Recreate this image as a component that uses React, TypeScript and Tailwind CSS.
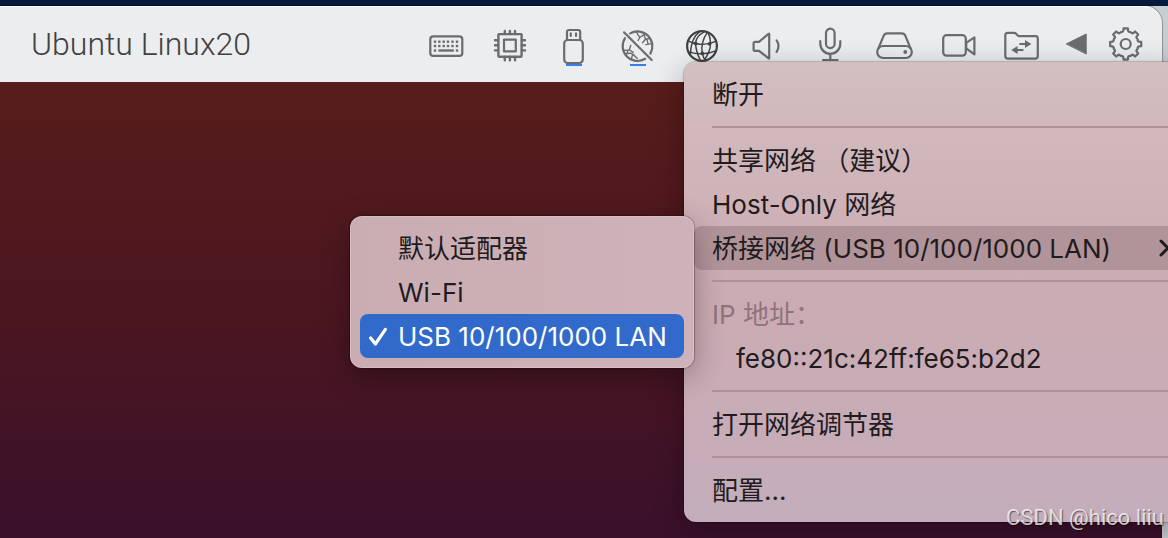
import React from 'react';

const UI_FONT = "font-['Inter','Noto_Sans_CJK_SC',sans-serif]";

// eight teeth with rounded valleys between them
const GEAR_PATH = (() => {
  const at = (angle: number, r: number) => `${(19.7 + r * Math.cos(angle)).toFixed(2)} ${(22 + r * Math.sin(angle)).toFixed(2)}`;
  const step = Math.PI / 4;
  let d = '';
  for (let i = 0; i < 8; i++) {
    const mid = i * step - Math.PI / 2;
    d += `${i === 0 ? 'M' : 'L'}${at(mid - 0.17, 13.6)}L${at(mid - 0.14, 15.7)}L${at(mid + 0.14, 15.7)}L${at(mid + 0.17, 13.6)}`;
    d += `Q${at(mid + 0.22, 12)} ${at(mid + step / 2, 12.9)}Q${at(mid + step - 0.22, 12)} ${at(mid + step - 0.17, 13.6)}`;
  }
  return `${d}Z`;
})();

const KEY_COLUMNS = [9, 13.3, 17.7, 22, 26.5, 31];

interface Device {
  label: string;
  width: string;
  color: string;
  active?: boolean;
  art: React.ReactNode;
}

const DEVICES: Device[] = [
  {
    label: '键盘',
    width: 'w-16',
    color: 'text-[#6b6c6e]',
    art: (
      <>
        <rect x="4.3" y="14.3" width="32" height="19.6" rx="3" />
        <g fill="currentColor" stroke="none">
          {[19.7, 24].map(y => KEY_COLUMNS.map(x => <rect key={`${x}-${y}`} x={x - 1.2} y={y - 1.2} width="2.4" height="2.4" />))}
          <rect x="7.8" y="27.3" width="2.4" height="2.4" />
          <rect x="12.4" y="27.3" width="15.4" height="2.4" />
          <rect x="29.8" y="27.3" width="2.4" height="2.4" />
        </g>
      </>
    ),
  },
  {
    label: '处理器',
    width: 'w-16',
    color: 'text-[#6b6c6e]',
    art: (
      <>
        <rect x="8.4" y="12.1" width="23.2" height="22.6" rx="0.6" strokeWidth="2.4" />
        <rect x="14" y="17.6" width="11.8" height="11.8" />
        <path strokeWidth="2.4" d="M14.8 9v3M19.9 9v3M25 9v3M14.8 35v3.2M19.9 35v3.2M25 35v3.2M5 18.2h3M5 23.3h3M5 28.4h3M32 18.2h3M32 23.3h3M32 28.4h3" />
      </>
    ),
  },
  {
    label: 'USB',
    width: 'w-16',
    color: 'text-[#6b6c6e]',
    active: true,
    art: (
      <>
        <rect x="10.2" y="18" width="18.6" height="23" rx="3.5" />
        <path d="M13 17.8V10q0-2 2-2h9.2q2 0 2 2v7.8M16.8 11.4v2.6M22 11.4v2.6" />
      </>
    ),
  },
  {
    label: '网络 2',
    width: 'w-16',
    color: 'text-[#6b6c6e]',
    active: true,
    art: (
      <>
        <path d="M12.2 11.4A14.8 14.8 0 0 1 32.4 31.6M27.2 36.8A14.8 14.8 0 0 1 7 16.2" />
        <path d="M6 10.3L33.7 38" />
        <path strokeWidth="1.4" d="M18.5 10.2l3.2 5.3-1.6 3M21.7 15.5l4.8-3.2M24.5 20.8l3-3.6 4.8-1M27.5 17.2l-1.3-3.6M27.8 22.6l5.6-1M29.2 18.2l.8 4M5.4 28.4l5.8-.5 4 2.4M11.2 27.9l1.6-4.6M7.2 31.8l5.4-.6 3.6 2M9 31.6l.8-3.4M13.4 36.6l1.4-4.4 4.6 4.2" />
      </>
    ),
  },
  {
    label: '网络',
    width: 'w-16',
    color: 'text-[#3f4142]',
    art: (
      <>
        <circle cx="20" cy="24" r="14.9" />
        <g strokeWidth="1.4">
          <path d="M17.8 9.4C12.4 13.4 8.6 20.6 8.4 32.8" />
          <path d="M22.6 9.6C16.6 12.6 13.4 17.6 13.6 21.4c.2 6.4 2 11.4 4.6 16.6" />
          <path d="M25.4 10.4C21.4 15.6 18.6 24.6 20.3 31.4c.6 2.6 1.3 5 3.2 6.8" />
          <path d="M26 10.8c3 4.8 3.4 13.6.6 19.6-1.2 2.8-2.6 5.2-4.2 7.8" />
          <path d="M5.6 18.6c6 3.6 17 6 28.8.6" />
          <path d="M6 29.6c8.6 2.8 19.6 3 28.2-1" />
        </g>
        <g fill="currentColor" stroke="none">
          <circle cx="13.6" cy="21.4" r="1.9" />
          <circle cx="27.6" cy="21.8" r="1.9" />
          <circle cx="20.3" cy="31.4" r="1.9" />
        </g>
      </>
    ),
  },
  {
    label: '声音',
    width: 'w-16',
    color: 'text-[#6b6c6e]',
    art: (
      <>
        <path d="M9 19.8h4L22.6 11.8q.6-.4.6.4V36q0 .8-.6.4L13 28.8H9q-1.4 0-1.4-1.4v-6.2q0-1.4 1.4-1.4z" />
        <path d="M30.6 18.4q3.8 5.6 0 11.4" />
      </>
    ),
  },
  {
    label: '麦克风',
    width: 'w-16',
    color: 'text-[#6b6c6e]',
    art: (
      <>
        <rect x="16" y="6.7" width="8.6" height="19.4" rx="4.3" />
        <path d="M10.3 19v2.8a10 10 0 0 0 20 0V19M20.3 32v5.6M13 38h14.6" />
      </>
    ),
  },
  {
    label: '硬盘',
    width: 'w-16',
    color: 'text-[#6b6c6e]',
    art: (
      <>
        <path d="M4.4 26.4L9.6 13.8q1-2.4 3.6-2.4h14.6q2.6 0 3.6 2.4l5.2 12.6" />
        <rect x="3.2" y="24" width="34.6" height="12" rx="6" />
        <circle cx="31.3" cy="30" r="1.9" fill="currentColor" stroke="none" />
      </>
    ),
  },
  {
    label: '摄像头',
    width: 'w-16',
    color: 'text-[#6b6c6e]',
    art: (
      <>
        <rect x="5.2" y="13.2" width="22.6" height="20.4" rx="3.4" />
        <path d="M28.2 20.8l8.2-5.4v17l-8.2-6z" />
      </>
    ),
  },
  {
    label: '共享文件夹',
    width: 'w-16',
    color: 'text-[#6b6c6e]',
    art: (
      <>
        <path d="M3.3 34V13.2q0-2.4 2.4-2.4h6.2q1.4 0 2.2.9l1.4 1.7q.6.7 1.6.7h16.4q2.3 0 2.3 2.3V34q0 2.6-2.6 2.6H5.9q-2.6 0-2.6-2.6z" />
        <path d="M18.2 22h6M14.6 28h6" />
        <path fill="currentColor" stroke="none" d="M23 18l6.4 4-6.4 4zM15.6 24l-6.4 4 6.4 4z" />
      </>
    ),
  },
  {
    label: '收起',
    width: 'w-11',
    color: 'text-[#6b6c6e]',
    art: <path fill="currentColor" strokeWidth="1" d="M10.6 21.8L30.2 12v19.6z" />,
  },
  {
    label: '设置',
    width: 'w-14',
    color: 'text-[#6b6c6e]',
    art: (
      <>
        <path d={GEAR_PATH} />
        <circle cx="19.7" cy="22" r="5" />
      </>
    ),
  },
];

const DeviceButton: React.FC<{ device: Device }> = ({ device }) => (
  <button type="button" aria-label={device.label} className={`flex h-full shrink-0 items-center justify-center ${device.width} ${device.color}`}>
    <svg className="h-11 w-10" viewBox="0 0 40 44" fill="none" stroke="currentColor" strokeWidth="2.2" strokeLinecap="round" strokeLinejoin="round">
      {device.art}
      {device.active && <rect x="12" y="42" width="16" height="2" fill="#3b7ded" stroke="none" />}
    </svg>
  </button>
);

const Separator: React.FC = () => <div role="separator" className="my-[10px] ml-[18px] h-[2px] bg-[#ae929b]" />;

const MenuItem: React.FC<{ children: React.ReactNode; className?: string }> = ({ children, className = '' }) => (
  <button type="button" role="menuitem" className={`flex h-11 w-full items-center rounded-lg pt-[2px] pl-[18px] text-left whitespace-pre ${className}`}>
    {children}
  </button>
);

const NetworkMenu: React.FC = () => (
  <div
    role="menu"
    className="absolute top-[62px] -right-5 w-[504px] rounded-xl bg-linear-to-b from-[#d3bec0] via-[#cbabb2] to-[#c4adbb] p-[10px] shadow-[0_0_1px_1px_rgba(0,0,0,0.2),0_8px_30px_rgba(0,0,0,0.3)]"
  >
    <MenuItem>断开</MenuItem>
    <Separator />
    <MenuItem>共享网络 （建议）</MenuItem>
    <MenuItem>Host-Only 网络</MenuItem>
    <MenuItem className="justify-between bg-[#b19499] pr-2">
      桥接网络 (USB 10/100/1000 LAN)
      <svg className="h-5 w-3" viewBox="0 0 12 20" fill="none" stroke="currentColor" strokeWidth="3" strokeLinecap="round" strokeLinejoin="round">
        <path d="M3 2l7 7-7 7" />
      </svg>
    </MenuItem>
    <Separator />
    <div className="flex h-11 items-center pt-[2px] pl-[18px] text-[#8f737c]">IP 地址：</div>
    <div className="flex h-11 items-center pt-[2px] pl-[42px]">fe80::21c:42ff:fe65:b2d2</div>
    <Separator />
    <MenuItem>打开网络调节器</MenuItem>
    <Separator />
    <MenuItem>配置...</MenuItem>
  </div>
);

const AdapterMenu: React.FC = () => (
  <div
    role="menu"
    className="absolute top-[216px] right-[474px] w-[344px] rounded-xl bg-linear-to-r from-[#caadb2] to-[#ceb2b9] p-[10px] shadow-[inset_0_0_0_1px_rgba(255,255,255,0.2),0_0_1px_1px_rgba(0,0,0,0.25),0_8px_30px_rgba(0,0,0,0.3)]"
  >
    <MenuItem className="pl-[38px]">默认适配器</MenuItem>
    <MenuItem className="pl-[38px]">Wi-Fi</MenuItem>
    <button type="button" role="menuitemradio" aria-checked="true" className="flex h-11 w-full items-center rounded-lg bg-[#316acb] pt-[2px] pl-2 text-left whitespace-pre text-white">
      <svg className="mr-[10px] h-5 w-5" viewBox="0 0 20 20" fill="none" stroke="currentColor" strokeWidth="3.2" strokeLinecap="round" strokeLinejoin="round">
        <path d="M2.6 11l4.8 6L17.4 2.4" />
      </svg>
      USB 10/100/1000 LAN
    </button>
  </div>
);

const App: React.FC = () => (
  <div className={`relative flex min-h-screen flex-col overflow-hidden bg-[#c8cdd2] text-[26px] leading-none text-[#211b1d] ${UI_FONT}`}>
    <div className="h-[6px] bg-[#061a3c]" />
    <div className="mr-[6px] flex flex-1 flex-col">
      <header className="flex h-[76px] items-center justify-between rounded-tr-[18px] bg-[#ecedef] pr-2 pl-[31px] shadow-[inset_0_1px_0_#fff,0_0_1px_1px_rgba(0,0,0,0.3)]">
        <h1 className="font-['Roboto','Liberation_Sans',sans-serif] text-[32px] font-light whitespace-nowrap text-[#3f4142]">Ubuntu Linux20</h1>
        <div className="flex h-full">
          {DEVICES.map(device => (
            <DeviceButton key={device.label} device={device} />
          ))}
        </div>
      </header>
      <main className="flex-1 bg-linear-to-b from-[#571d1b] via-[#4c1620] to-[#3a102b]" />
    </div>
    <NetworkMenu />
    <AdapterMenu />
    <div className="absolute right-1 bottom-[9px] font-['Roboto','Liberation_Sans',sans-serif] text-[22px] text-white/75 [text-shadow:1px_1px_1px_rgba(0,0,0,0.5)]">CSDN @hico liiu</div>
  </div>
);

export default App;
